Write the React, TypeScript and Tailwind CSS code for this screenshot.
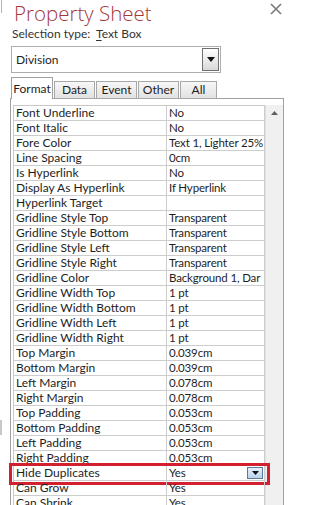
import React from 'react';

// property rows shown in the Format tab
const rows: [string, string][] = [
  ['Font Underline', 'No'],
  ['Font Italic', 'No'],
  ['Fore Color', 'Text 1, Lighter 25%'],
  ['Line Spacing', '0cm'],
  ['Is Hyperlink', 'No'],
  ['Display As Hyperlink', 'If Hyperlink'],
  ['Hyperlink Target', ''],
  ['Gridline Style Top', 'Transparent'],
  ['Gridline Style Bottom', 'Transparent'],
  ['Gridline Style Left', 'Transparent'],
  ['Gridline Style Right', 'Transparent'],
  ['Gridline Color', 'Background 1, Dar'],
  ['Gridline Width Top', '1 pt'],
  ['Gridline Width Bottom', '1 pt'],
  ['Gridline Width Left', '1 pt'],
  ['Gridline Width Right', '1 pt'],
  ['Top Margin', '0.039cm'],
  ['Bottom Margin', '0.039cm'],
  ['Left Margin', '0.078cm'],
  ['Right Margin', '0.078cm'],
  ['Top Padding', '0.053cm'],
  ['Bottom Padding', '0.053cm'],
  ['Left Padding', '0.053cm'],
  ['Right Padding', '0.053cm'],
  ['Hide Duplicates', 'Yes'],
  ['Can Grow', 'Yes'],
  ['Can Shrink', 'Yes'],
];

const tabs = [
  { label: 'Format', w: 'w-[42px]' },
  { label: 'Data', w: 'w-[41px]' },
  { label: 'Event', w: 'w-[41px]' },
  { label: 'Other', w: 'w-[41px]' },
  { label: 'All', w: 'w-[37px]' },
];

function Triangle() {
  return (
    <svg width="8" height="5" viewBox="0 0 8 5">
      <path d="M0 0h8L4 5z" fill="#111" />
    </svg>
  );
}

export default function App() {
  return (
    <div
      className="relative w-[292px] h-[505px] overflow-hidden bg-white text-[#1e1e1e]"
      style={{ fontFamily: "Lato, 'Open Sans', sans-serif" }}
    >
      {/* window edge bits */}
      <div className="absolute left-[1px] top-0 w-px h-[13px] bg-[#b4b4b4]" />
      <div className="absolute left-0 top-[420px] w-[2px] h-[15px] bg-[#c8c8c8]" />

      {/* header */}
      <div className="flex items-start justify-between pl-[14px] pr-[10px]">
        <h1
          className="text-[20.5px] font-light leading-[26px] text-[#a4373a]"
          style={{ fontFamily: "'Open Sans', sans-serif" }}
        >
          Property Sheet
        </h1>
        <svg width="12" height="12" viewBox="0 0 12 12" className="mt-[3px]">
          <path d="M1 1l10 10M11 1L1 11" stroke="#7a7a7a" strokeWidth="1.6" />
        </svg>
      </div>

      <div className="pl-[12px] mt-[1px] text-[12px] leading-[14px] text-[#333]">
        Selection type:&nbsp; <span className="underline underline-offset-2">T</span>ext Box
      </div>

      {/* object picker */}
      <div className="ml-[11px] mt-[5px] w-[210px] h-[27px] border border-[#adadad] flex items-center justify-between pl-[4px] pr-[1px]">
        <span className="text-[12px]">Division</span>
        <div className="w-[17px] h-[23px] border border-[#707070] bg-gradient-to-b from-white to-[#d9d9d9] flex items-center justify-center">
          <Triangle />
        </div>
      </div>

      {/* tabs */}
      <div className="ml-[11px] mt-[4px] flex items-end gap-[1px] relative z-10 -mb-px">
        {tabs.map((t, i) =>
          i === 0 ? (
            <div
              key={t.label}
              className={`${t.w} h-[22px] bg-white border border-b-0 border-[#a0a0a0] text-[12px] flex items-start justify-center pt-[2px]`}
            >
              {t.label}
            </div>
          ) : (
            <div
              key={t.label}
              className={`${t.w} h-[18px] bg-gradient-to-b from-[#f7f7f7] to-[#e2e2e2] border border-[#a8a8a8] text-[12px] flex items-center justify-center`}
            >
              {t.label}
            </div>
          ),
        )}
      </div>

      {/* property grid */}
      <div className="ml-[10px] w-[274px] border border-b-0 border-[#a0a0a0] pt-[6px] pl-[2px] flex">
        <div className="w-[252px] border-t border-l border-[#c8c8c8]">
          {rows.map(([label, value]) => (
            <div key={label} className="relative h-[15px] flex border-b border-[#cdcdcd]">
              <div className="w-[153px] shrink-0 border-r border-[#cdcdcd] pl-[2px] text-[12px] leading-[14px] whitespace-nowrap overflow-hidden">
                {label}
              </div>
              <div className="flex-1 min-w-0 border-r border-[#cdcdcd] pl-[2px] text-[11.5px] tracking-[-0.15px] leading-[14px] whitespace-nowrap overflow-hidden flex">
                <span className="flex-1">{value}</span>
                {label === 'Hide Duplicates' && (
                  <div className="w-[16px] h-[12px] mt-[1px] mr-[1px] border border-[#5c7a9c] bg-gradient-to-b from-[#e6f0fa] to-[#b9d2ea] flex items-center justify-center">
                    <svg width="7" height="4" viewBox="0 0 7 4">
                      <path d="M0 0h7L3.5 4z" fill="#111" />
                    </svg>
                  </div>
                )}
              </div>
              {label === 'Hide Duplicates' && (
                <div className="absolute left-[-5px] top-[-3px] w-[261px] h-[22px] border-[3px] border-[#d3202f] pointer-events-none" />
              )}
            </div>
          ))}
        </div>
        <div className="w-[18px] bg-[#f0f0f0] border-l border-[#e0e0e0] flex justify-center pt-[6px]">
          <svg width="7" height="4" viewBox="0 0 7 4">
            <path d="M0 4h7L3.5 0z" fill="#606060" />
          </svg>
        </div>
      </div>
    </div>
  );
}
